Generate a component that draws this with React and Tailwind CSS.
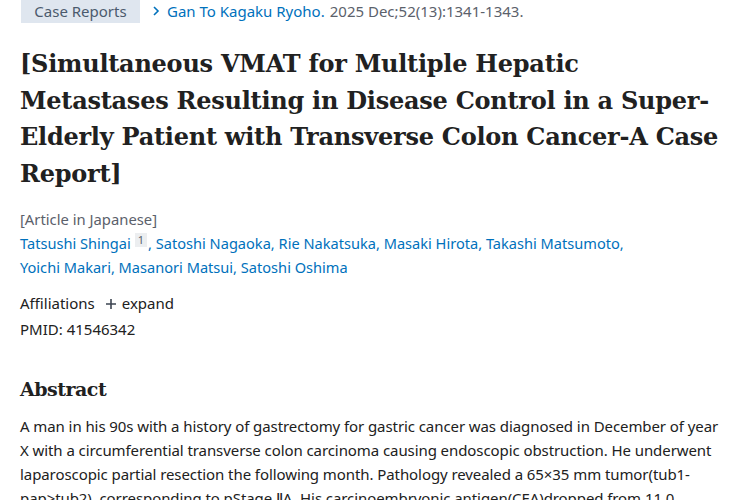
import React from "react";

export default function App() {
  return (
    <div className="w-[750px] h-[500px] overflow-hidden bg-white text-[#212121] font-['Noto_Sans',sans-serif]">
      <div className="px-[20px]">
        {/* breadcrumb */}
        <div className="flex items-center h-[24px] -mt-[1px] text-[15px] leading-[24px] whitespace-nowrap">
          <span className="bg-[#dfe6ef] text-[#4b5a6d] h-[24px] flex items-center w-[119px] justify-center ml-[1px] whitespace-nowrap">
            Case Reports
          </span>
          <span className="ml-[11px] flex items-center text-[#0071bc]">
            <svg width="10" height="12" viewBox="0 0 10 12" className="mr-[6px]">
              <path d="M3 2 L7 6 L3 10" fill="none" stroke="#0071bc" strokeWidth="1.6" />
            </svg>
            Gan To Kagaku Ryoho.
          </span>
          <span className="ml-[5px] text-[#5b616b]">2025 Dec;52(13):1341-1343.</span>
        </div>

        {/* title */}
        <h1 className="mt-[23px] font-['DejaVu_Serif',serif] font-bold text-[24px] leading-[36.5px] tracking-[-0.25px] text-[#212121] whitespace-nowrap">
          [Simultaneous VMAT for Multiple Hepatic<br />
          Metastases Resulting in Disease Control in a Super-<br />
          Elderly Patient with Transverse Colon Cancer-A Case<br />
          Report]
        </h1>

        {/* meta */}
        <div className="mt-[15px] text-[14.8px] leading-[24px] text-[#5b616b]">[Article in Japanese]</div>
        <div className="text-[14.6px] leading-[24px] text-[#0071bc]">
          <div className="flex items-center whitespace-nowrap">
            <span>Tatsushi Shingai</span>
            <span className="ml-[4px] mr-[1px] bg-[#eceef0] text-[#5b616b] text-[11px] leading-[14px] px-[3px] -mt-[6px]">1</span>
            <span>, Satoshi Nagaoka, Rie Nakatsuka, Masaki Hirota, Takashi Matsumoto,</span>
          </div>
          <div>Yoichi Makari, Masanori Matsui, Satoshi Oshima</div>
        </div>

        <div className="mt-[11px] text-[15px] leading-[26px] flex items-center">
          <span>Affiliations</span>
          <span className="ml-[10px] flex items-center text-[#212121]">
            <svg width="12" height="12" viewBox="0 0 12 12" className="mr-[5px] mt-[1px]">
              <path d="M6 1 V11 M1 6 H11" stroke="#3d4551" strokeWidth="1.6" />
            </svg>
            expand
          </span>
        </div>
        <div className="text-[15px] leading-[26px]">PMID: 41546342</div>

        {/* abstract */}
        <h2 className="mt-[33px] font-['DejaVu_Serif',serif] font-bold text-[19px] leading-[28px] tracking-[-0.5px] text-[#212121]">
          Abstract
        </h2>
        <p className="mt-[11px] text-[15px] leading-[24px] tracking-[-0.08px] text-[#212121] whitespace-nowrap">
          A man in his 90s with a history of gastrectomy for gastric cancer was diagnosed in December of year<br />
          X with a circumferential transverse colon carcinoma causing endoscopic obstruction. He underwent<br />
          laparoscopic partial resection the following month. Pathology revealed a 65×35 mm tumor(tub1-<br />
          pap&gt;tub2), corresponding to pStage ⅡA. His carcinoembryonic antigen(CEA)dropped from 11.0
        </p>
      </div>
    </div>
  );
}
